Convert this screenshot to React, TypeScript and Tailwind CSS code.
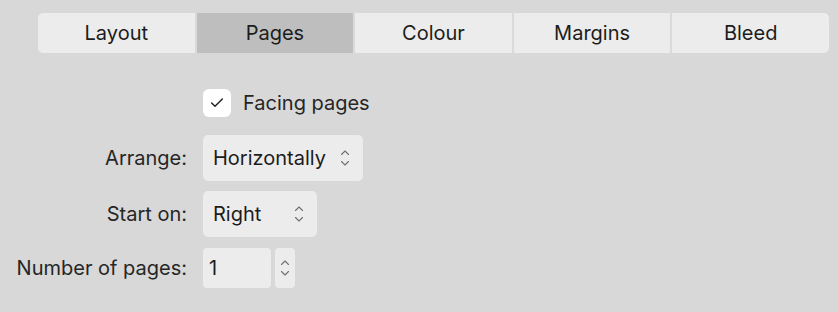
import { Check } from 'lucide-react';

const tabs = ['Layout', 'Pages', 'Colour', 'Margins', 'Bleed'];

function Chevrons({ className = '' }: { className?: string }) {
  return (
    <svg width="12" height="22" viewBox="0 0 12 22" className={className} fill="none" stroke="#707070" strokeWidth="1.1" strokeLinecap="round" strokeLinejoin="round">
      <path d="M2.5 7.5 L6 4 L9.5 7.5" />
      <path d="M2.5 14.5 L6 18 L9.5 14.5" />
    </svg>
  );
}

export default function App() {
  return (
    <div className="w-[838px] h-[312px] bg-[#d8d8d8] text-[#1c1c1c] font-['Inter',sans-serif] overflow-hidden">
      {/* Tabs */}
      <div className="pt-[13px] pl-[38px] pr-[9px]">
        <div className="flex h-[40px] rounded-[5px] overflow-hidden bg-[#ececec]">
          {tabs.map((t, i) => (
            <div
              key={t}
              className={`flex-1 flex items-center justify-center text-[20px] ${
                i > 0 ? 'border-l-2 border-[#dadada]' : ''
              } ${t === 'Pages' ? 'bg-[#bebebe]' : ''}`}
            >
              {t}
            </div>
          ))}
        </div>
      </div>

      {/* Form */}
      <div className="grid grid-cols-[187px_1fr] gap-x-4 items-center text-[20px] text-[#262626] mt-[36px]">
        <div />
        <div className="flex items-center gap-3 h-[28px]">
          <div className="w-[28px] h-[28px] rounded-[6px] bg-white flex items-center justify-center">
            <Check className="w-[16px] h-[16px] text-[#222]" strokeWidth={2.2} />
          </div>
          <span>Facing pages</span>
        </div>

        <div className="text-right mt-[18px]">Arrange:</div>
        <div className="mt-[18px]">
          <div className="w-[160px] h-[46px] rounded-[5px] bg-[#ececec] flex items-center justify-between pl-[10px] pr-[12px] text-[#1c1c1c]">
            <span>Horizontally</span>
            <Chevrons />
          </div>
        </div>

        <div className="text-right mt-[10px]">Start on:</div>
        <div className="mt-[10px]">
          <div className="w-[114px] h-[46px] rounded-[5px] bg-[#ececec] flex items-center justify-between pl-[10px] pr-[12px] text-[#1c1c1c]">
            <span>Right</span>
            <Chevrons />
          </div>
        </div>

        <div className="text-right mt-[11px]">Number of pages:</div>
        <div className="mt-[11px] flex items-center gap-[4px]">
          <div className="w-[68px] h-[40px] rounded-[4px] bg-[#ececec] flex items-center pl-[6px] text-[#1c1c1c]">
            1
          </div>
          <div className="w-[20px] h-[40px] rounded-[4px] bg-[#ececec] flex items-center justify-center">
            <Chevrons />
          </div>
        </div>
      </div>
    </div>
  );
}
